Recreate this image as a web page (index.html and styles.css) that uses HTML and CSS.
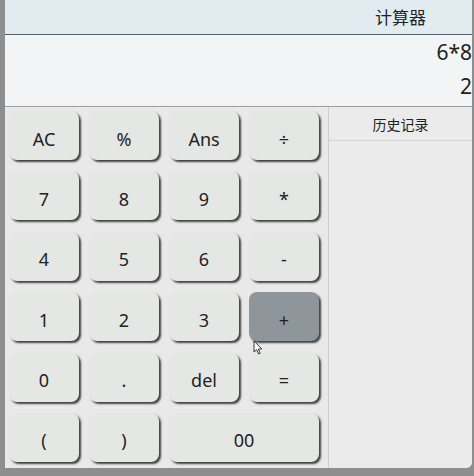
FILE: index.html
```html
<!DOCTYPE html>
<html lang="zh">
<head>
<meta charset="utf-8">
<title>计算器</title>
<link rel="stylesheet" href="styles.css">
</head>
<body>
<div class="window">
  <header class="titlebar">计算器</header>
  <section class="display">
    <div class="expr">6*8</div>
    <div class="result">2</div>
  </section>
  <main class="body">
    <div class="keypad">
      <button class="key">AC</button>
      <button class="key">%</button>
      <button class="key">Ans</button>
      <button class="key">÷</button>
      <button class="key">7</button>
      <button class="key">8</button>
      <button class="key">9</button>
      <button class="key">*</button>
      <button class="key">4</button>
      <button class="key">5</button>
      <button class="key">6</button>
      <button class="key">-</button>
      <button class="key">1</button>
      <button class="key">2</button>
      <button class="key">3</button>
      <button class="key hover">+</button>
      <button class="key">0</button>
      <button class="key">.</button>
      <button class="key">del</button>
      <button class="key">=</button>
      <button class="key">(</button>
      <button class="key">)</button>
      <button class="key wide">00</button>
      <svg class="cursor" width="10" height="15" viewBox="0 0 10 15"><path d="M1 1 L1 12 L3.6 9.6 L5.6 14 L7.2 13.3 L5.3 9 L8.8 9 Z" fill="#fff" stroke="#222" stroke-width="0.9"/></svg>
    </div>
    <aside class="history">
      <div class="history-title">历史记录</div>
    </aside>
  </main>
</div>
</body>
</html>
```
FILE: styles.css
```css
* { box-sizing: border-box; }
html, body { margin: 0; padding: 0; }
body {
  width: 474px;
  height: 476px;
  background: #8e8e8e;
  font-family: "Noto Sans", "Noto Sans CJK SC", sans-serif;
  overflow: hidden;
}
.window {
  margin: 0 2px 8px 5px;
  height: 468px;
  display: flex;
  flex-direction: column;
  background: #e9e9e9;
  border-radius: 0 0 6px 0;
}
.titlebar {
  height: 35px;
  background: #e2ecf0;
  border-bottom: 1px solid #53606a;
  text-align: right;
  padding-right: 46px;
  font-family: "Noto Sans CJK SC", sans-serif;
  font-size: 17px;
  line-height: 34px;
  color: #222;
}
.display {
  height: 72px;
  background: #f2f4f6;
  border-bottom: 1px solid #9e9e9e;
  text-align: right;
  font-size: 21px;
  color: #1e1e1e;
  padding-top: 0;
}
.expr, .result {
  height: 34px;
  line-height: 34px;
}
.body {
  flex: 1;
  display: flex;
  min-height: 0;
}
.keypad {
  position: relative;
  width: 324px;
  border-right: 1px solid #cfcfcf;
  padding: 4px 0 0 4px;
  display: grid;
  grid-template-columns: repeat(4, 70px);
  grid-template-rows: repeat(6, 50px);
  column-gap: 10px;
  row-gap: 10.4px;
  align-content: start;
  background: #e9e9e9;
}
.key {
  border: none;
  margin: 0;
  padding: 6px 0 0 0;
  background: #e5e7e4;
  border-radius: 8px;
  box-shadow: 2px 2px 2px rgba(0, 0, 0, 0.72);
  font-family: "Noto Sans", sans-serif;
  font-size: 18px;
  color: #222;
  height: 49px;
}
.key.wide { grid-column: span 2; }
.key.hover { background: #8f969b; }
.cursor {
  position: absolute;
  left: 248px;
  top: 233px;
}
.history {
  flex: 1;
  background: #ebebeb;
  border-radius: 0 0 6px 0;
}
.history-title {
  height: 34px;
  border-bottom: 1px solid #d4d4d4;
  text-align: center;
  font-family: "Noto Sans CJK SC", sans-serif;
  font-size: 14px;
  line-height: 34px;
  color: #222;
}
```
